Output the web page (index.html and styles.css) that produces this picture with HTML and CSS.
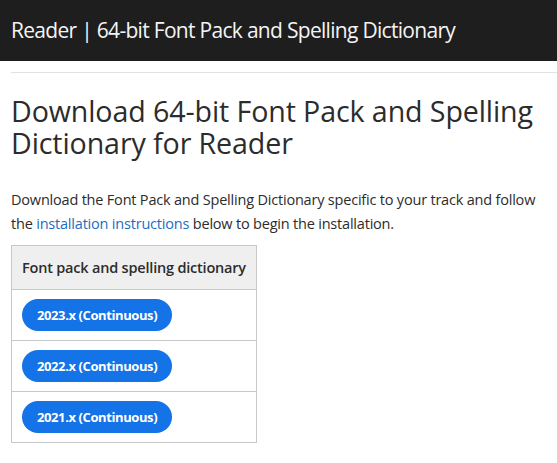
FILE: index.html
```html
<!DOCTYPE html>
<html lang="en">
<head>
<meta charset="utf-8">
<title>Reader | 64-bit Font Pack and Spelling Dictionary</title>
<link rel="stylesheet" href="styles.css">
</head>
<body>
<header class="topbar">
  <div class="topbar-title">Reader | 64-bit Font Pack and Spelling Dictionary</div>
</header>
<main class="content">
  <div class="divider"></div>
  <h1 class="page-title">Download 64-bit Font Pack and Spelling Dictionary for Reader</h1>
  <p class="intro">Download the Font Pack and Spelling Dictionary specific to your track and follow the <a href="#" class="link">installation instructions</a> below to begin the installation.</p>
  <table class="dl-table">
    <thead>
      <tr><th>Font pack and spelling dictionary</th></tr>
    </thead>
    <tbody>
      <tr><td><a href="#" class="pill">2023.x (Continuous)</a></td></tr>
      <tr><td><a href="#" class="pill">2022.x (Continuous)</a></td></tr>
      <tr><td><a href="#" class="pill">2021.x (Continuous)</a></td></tr>
    </tbody>
  </table>
</main>
</body>
</html>
```
FILE: styles.css
```css
html, body {
  margin: 0;
  padding: 0;
  background: #fff;
}
body {
  font-family: "Open Sans", "Noto Sans", sans-serif;
  color: #2c2c2c;
}
.topbar {
  background: #1e1e1e;
  height: 61px;
  display: flex;
  align-items: center;
  padding-left: 11px;
}
.topbar-title {
  color: #f4f4f4;
  font-size: 21px;
  letter-spacing: -0.7px;
  padding-bottom: 2px;
}
.content {
  padding-left: 11px;
}
.divider {
  margin-top: 11px;
  border-top: 1px solid #e1e1e1;
}
.page-title {
  margin: 22px 0 0;
  font-size: 28.6px;
  line-height: 32px;
  font-weight: 400;
  color: #2c2c2c;
  letter-spacing: -0.1px;
}
.intro {
  margin: 29px 0 0;
  font-size: 14.5px;
  line-height: 24px;
  letter-spacing: -0.2px;
  max-width: 540px;
}
.link {
  color: #1b6fc0;
  text-decoration: none;
}
.dl-table {
  margin-top: 9px;
  border-collapse: collapse;
  width: 245px;
}
.dl-table th {
  background: #efefef;
  border: 1px solid #c8c8c8;
  height: 43px;
  padding: 0 10px;
  text-align: left;
  font-size: 14.5px;
  font-weight: 600;
  letter-spacing: -0.2px;
  color: #2c2c2c;
  white-space: nowrap;
}
.dl-table td {
  border: 1px solid #c8c8c8;
  height: 50px;
  padding: 0 10px;
}
.pill {
  display: inline-flex;
  align-items: center;
  height: 32px;
  padding: 0 15px;
  border-radius: 16px;
  background: #1473e6;
  color: #fff;
  font-size: 13px;
  font-weight: 700;
  letter-spacing: -0.4px;
  text-decoration: none;
}
```
